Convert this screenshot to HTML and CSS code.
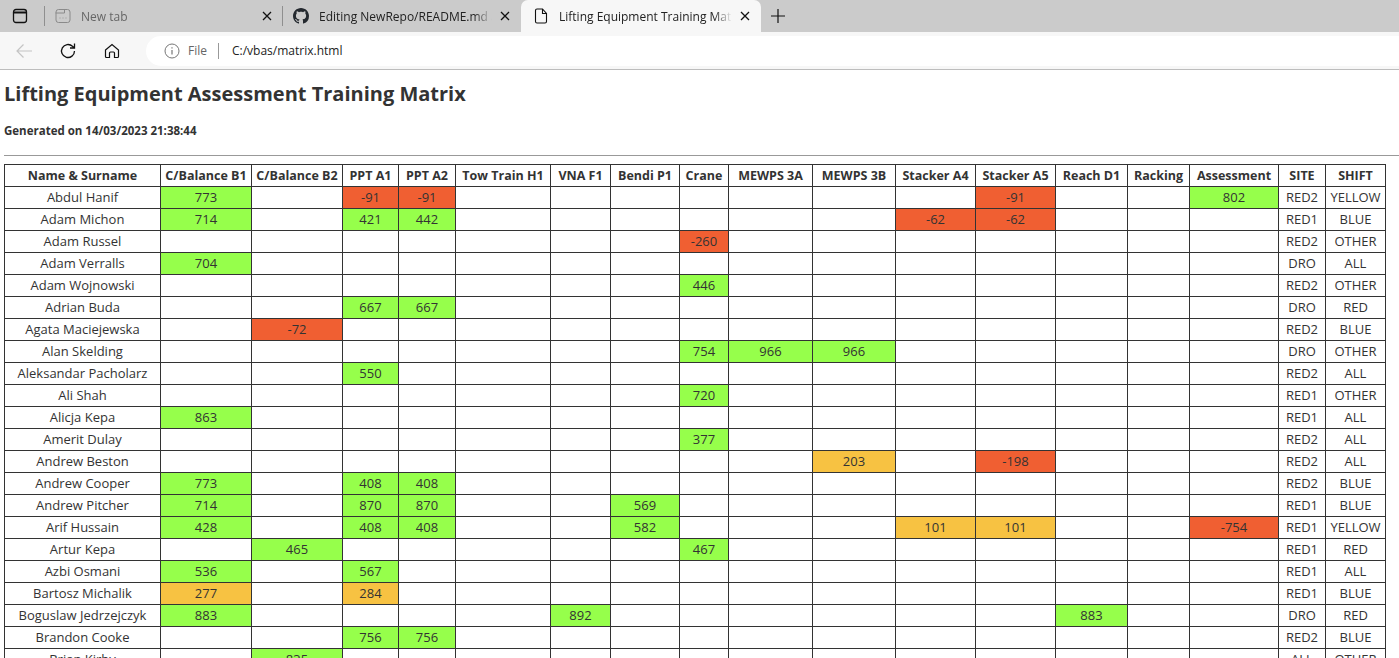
FILE: index.html
```html
<!DOCTYPE html>
<html lang="en">
<head>
    <meta charset="UTF-8">
    <title>Lifting Equipment Training Matrix</title>
    <link rel="stylesheet" href="styles.css">
</head>
<body>
    <div class="tabbar">
        <svg class="panelIcon" width="16" height="16" viewBox="0 0 16 16"><rect x="1.5" y="1.5" width="13" height="13" rx="2.5" fill="none" stroke="#111" stroke-width="1.3"/><path d="M2 3.5h12v2H2z" fill="#111"/></svg>
        <div class="tab">
            <svg class="favicon" width="16" height="16" viewBox="0 0 16 16"><rect x="1" y="1.5" width="14" height="13" rx="2.5" fill="none" stroke="#8a8a8a"/><path d="M1 5h8.5V1.5M5 10h.01M8 10h.01M11 10h.01" fill="none" stroke="#8a8a8a" stroke-linecap="round"/></svg>
            <span class="tabTitle muted">New tab</span>
            <svg class="close" width="10" height="10" viewBox="0 0 10 10"><path d="M1 1l8 8M9 1L1 9" stroke="#111" stroke-width="1.3"/></svg>
        </div>
        <div class="tab">
            <svg class="favicon" width="16" height="16" viewBox="0 0 16 16"><path fill="#24292f" d="M8 0C3.58 0 0 3.58 0 8c0 3.54 2.29 6.53 5.47 7.59.4.07.55-.17.55-.38 0-.19-.01-.82-.01-1.49-2.01.37-2.53-.49-2.69-.94-.09-.23-.48-.94-.82-1.13-.28-.15-.68-.52-.01-.53.63-.01 1.08.58 1.23.82.72 1.21 1.87.87 2.33.66.07-.52.28-.87.51-1.07-1.78-.2-3.64-.89-3.64-3.95 0-.87.31-1.59.82-2.15-.08-.2-.36-1.02.08-2.12 0 0 .67-.21 2.2.82.64-.18 1.32-.27 2-.27s1.36.09 2 .27c1.53-1.04 2.2-.82 2.2-.82.44 1.1.16 1.92.08 2.12.51.56.82 1.27.82 2.15 0 3.07-1.87 3.75-3.65 3.95.29.25.54.73.54 1.48 0 1.07-.01 1.93-.01 2.2 0 .21.15.46.55.38A8.01 8.01 0 0 0 16 8c0-4.42-3.58-8-8-8z"/></svg>
            <span class="tabTitle">Editing NewRepo/README.md at main</span>
            <svg class="close" width="10" height="10" viewBox="0 0 10 10"><path d="M1 1l8 8M9 1L1 9" stroke="#111" stroke-width="1.3"/></svg>
        </div>
        <div class="tab active">
            <svg class="favicon" width="16" height="16" viewBox="0 0 16 16"><path d="M2.5 2.5A1.5 1.5 0 0 1 4 1h5.5l4 4.5V13.500a1.500 1.500 0 0 1-1.500 1.500H4a1.500 1.500 0 0 1-1.500-1.500zM9.500 1v4.500h4" fill="none" stroke="#111" stroke-width="1.1"/></svg>
            <span class="tabTitle">Lifting Equipment Training Matrix</span>
            <svg class="close" width="10" height="10" viewBox="0 0 10 10"><path d="M1 1l8 8M9 1L1 9" stroke="#111" stroke-width="1.3"/></svg>
        </div>
        <svg class="plus" width="16" height="16" viewBox="0 0 16 16"><path d="M8 1v14M1 8h14" stroke="#111" stroke-width="1.2"/></svg>
    </div>

    <div class="toolbar">
        <svg class="navIcon" width="18" height="18" viewBox="0 0 18 18"><path d="M17 9H2M8.500 2.500L2 9l6.500 6.500" fill="none" stroke="#c4c4c4" stroke-width="1.2"/></svg>
        <svg class="navIcon" width="18" height="18" viewBox="0 0 18 18"><path d="M15.500 9a6.500 6.500 0 1 1-2-4.700L15.500 6M15.500 1.500V6H11" fill="none" stroke="#111" stroke-width="1.3"/></svg>
        <svg class="navIcon" width="18" height="18" viewBox="0 0 18 18"><path d="M2.500 8L9 2.500 15.500 8v6.500a1 1 0 0 1-1 1h-3V11a1 1 0 0 0-1-1h-3a1 1 0 0 0-1 1v4.500h-3a1 1 0 0 1-1-1z" fill="none" stroke="#111" stroke-width="1.2"/></svg>
        <div class="address">
            <svg width="16" height="16" viewBox="0 0 16 16"><circle cx="8" cy="8" r="7" fill="none" stroke="#777"/><path d="M8 7v4.500M8 4.300v1.200" stroke="#777" stroke-width="1.200"/></svg>
            <span class="scheme">File</span>
            <span class="addrSep"></span>
            <span class="url">C:/vbas/matrix.html</span>
        </div>
    </div>

    <main class="page">
        <h2>Lifting Equipment Assessment Training Matrix</h2>
        <h5>Generated on 14/03/2023 21:38:44</h5>
        <hr>
        <table>
            <colgroup>
                <col class="c156"><col class="c91"><col class="c91"><col class="c56"><col class="c57"><col class="c95"><col class="c60"><col class="c69"><col class="c49"><col class="c84"><col class="c83"><col class="c80"><col class="c80"><col class="c72"><col class="c62"><col class="c89"><col class="c47"><col class="c60">
            </colgroup>
            <tr><th>Name &amp; Surname</th><th>C/Balance B1</th><th>C/Balance B2</th><th>PPT A1</th><th>PPT A2</th><th>Tow Train H1</th><th>VNA F1</th><th>Bendi P1</th><th>Crane</th><th>MEWPS 3A</th><th>MEWPS 3B</th><th>Stacker A4</th><th>Stacker A5</th><th>Reach D1</th><th>Racking</th><th>Assessment</th><th>SITE</th><th>SHIFT</th></tr>
            <tr><td>Abdul Hanif</td><td class="ok">773</td><td></td><td class="bad">-91</td><td class="bad">-91</td><td></td><td></td><td></td><td></td><td></td><td></td><td></td><td class="bad">-91</td><td></td><td></td><td class="ok">802</td><td>RED2</td><td>YELLOW</td></tr>
            <tr><td>Adam Michon</td><td class="ok">714</td><td></td><td class="ok">421</td><td class="ok">442</td><td></td><td></td><td></td><td></td><td></td><td></td><td class="bad">-62</td><td class="bad">-62</td><td></td><td></td><td></td><td>RED1</td><td>BLUE</td></tr>
            <tr><td>Adam Russel</td><td></td><td></td><td></td><td></td><td></td><td></td><td></td><td class="bad">-260</td><td></td><td></td><td></td><td></td><td></td><td></td><td></td><td>RED2</td><td>OTHER</td></tr>
            <tr><td>Adam Verralls</td><td class="ok">704</td><td></td><td></td><td></td><td></td><td></td><td></td><td></td><td></td><td></td><td></td><td></td><td></td><td></td><td></td><td>DRO</td><td>ALL</td></tr>
            <tr><td>Adam Wojnowski</td><td></td><td></td><td></td><td></td><td></td><td></td><td></td><td class="ok">446</td><td></td><td></td><td></td><td></td><td></td><td></td><td></td><td>RED2</td><td>OTHER</td></tr>
            <tr><td>Adrian Buda</td><td></td><td></td><td class="ok">667</td><td class="ok">667</td><td></td><td></td><td></td><td></td><td></td><td></td><td></td><td></td><td></td><td></td><td></td><td>DRO</td><td>RED</td></tr>
            <tr><td>Agata Maciejewska</td><td></td><td class="bad">-72</td><td></td><td></td><td></td><td></td><td></td><td></td><td></td><td></td><td></td><td></td><td></td><td></td><td></td><td>RED2</td><td>BLUE</td></tr>
            <tr><td>Alan Skelding</td><td></td><td></td><td></td><td></td><td></td><td></td><td></td><td class="ok">754</td><td class="ok">966</td><td class="ok">966</td><td></td><td></td><td></td><td></td><td></td><td>DRO</td><td>OTHER</td></tr>
            <tr><td>Aleksandar Pacholarz</td><td></td><td></td><td class="ok">550</td><td></td><td></td><td></td><td></td><td></td><td></td><td></td><td></td><td></td><td></td><td></td><td></td><td>RED2</td><td>ALL</td></tr>
            <tr><td>Ali Shah</td><td></td><td></td><td></td><td></td><td></td><td></td><td></td><td class="ok">720</td><td></td><td></td><td></td><td></td><td></td><td></td><td></td><td>RED1</td><td>OTHER</td></tr>
            <tr><td>Alicja Kepa</td><td class="ok">863</td><td></td><td></td><td></td><td></td><td></td><td></td><td></td><td></td><td></td><td></td><td></td><td></td><td></td><td></td><td>RED1</td><td>ALL</td></tr>
            <tr><td>Amerit Dulay</td><td></td><td></td><td></td><td></td><td></td><td></td><td></td><td class="ok">377</td><td></td><td></td><td></td><td></td><td></td><td></td><td></td><td>RED2</td><td>ALL</td></tr>
            <tr><td>Andrew Beston</td><td></td><td></td><td></td><td></td><td></td><td></td><td></td><td></td><td></td><td class="warn">203</td><td></td><td class="bad">-198</td><td></td><td></td><td></td><td>RED2</td><td>ALL</td></tr>
            <tr><td>Andrew Cooper</td><td class="ok">773</td><td></td><td class="ok">408</td><td class="ok">408</td><td></td><td></td><td></td><td></td><td></td><td></td><td></td><td></td><td></td><td></td><td></td><td>RED2</td><td>BLUE</td></tr>
            <tr><td>Andrew Pitcher</td><td class="ok">714</td><td></td><td class="ok">870</td><td class="ok">870</td><td></td><td></td><td class="ok">569</td><td></td><td></td><td></td><td></td><td></td><td></td><td></td><td></td><td>RED1</td><td>BLUE</td></tr>
            <tr><td>Arif Hussain</td><td class="ok">428</td><td></td><td class="ok">408</td><td class="ok">408</td><td></td><td></td><td class="ok">582</td><td></td><td></td><td></td><td class="warn">101</td><td class="warn">101</td><td></td><td></td><td class="bad">-754</td><td>RED1</td><td>YELLOW</td></tr>
            <tr><td>Artur Kepa</td><td></td><td class="ok">465</td><td></td><td></td><td></td><td></td><td></td><td class="ok">467</td><td></td><td></td><td></td><td></td><td></td><td></td><td></td><td>RED1</td><td>RED</td></tr>
            <tr><td>Azbi Osmani</td><td class="ok">536</td><td></td><td class="ok">567</td><td></td><td></td><td></td><td></td><td></td><td></td><td></td><td></td><td></td><td></td><td></td><td></td><td>RED1</td><td>ALL</td></tr>
            <tr><td>Bartosz Michalik</td><td class="warn">277</td><td></td><td class="warn">284</td><td></td><td></td><td></td><td></td><td></td><td></td><td></td><td></td><td></td><td></td><td></td><td></td><td>RED1</td><td>BLUE</td></tr>
            <tr><td>Boguslaw Jedrzejczyk</td><td class="ok">883</td><td></td><td></td><td></td><td></td><td class="ok">892</td><td></td><td></td><td></td><td></td><td></td><td></td><td class="ok">883</td><td></td><td></td><td>DRO</td><td>RED</td></tr>
            <tr><td>Brandon Cooke</td><td></td><td></td><td class="ok">756</td><td class="ok">756</td><td></td><td></td><td></td><td></td><td></td><td></td><td></td><td></td><td></td><td></td><td></td><td>RED2</td><td>BLUE</td></tr>
            <tr><td>Brian Kirby</td><td></td><td class="ok">835</td><td></td><td></td><td></td><td></td><td></td><td></td><td></td><td></td><td></td><td></td><td></td><td></td><td></td><td>ALL</td><td>OTHER</td></tr>
        </table>
    </main>
</body>
</html>
```

FILE: styles.css
```css
html, body {
    margin: 0;
    height: 100%;
    overflow: hidden;
}
body {
    font-family: "Open Sans", "Noto Sans", sans-serif;
    color: #333;
    background-color: #fff;
}

/* browser chrome */
.tabbar {
    height: 32px;
    background-color: #cbcbcb;
    display: flex;
    align-items: center;
}
.panelIcon {
    margin: 0 16px 0 12px;
}
.tab {
    height: 20px;
    width: 238px;
    box-sizing: border-box;
    padding: 0 10px;
    border-left: 1px solid #8f8f8f;
    display: flex;
    align-items: center;
    font-size: 12px;
    color: #222;
}
.tab.active {
    width: 240px;
    height: 32px;
    margin-left: 1px;
    padding: 0 11px 0 12px;
    border-left: 0;
    border-radius: 7px 7px 0 0;
    background-color: #f7f7f7;
}
.tabTitle {
    flex: 1;
    margin: 0 8px 0 10px;
    white-space: nowrap;
    overflow: hidden;
    -webkit-mask-image: linear-gradient(to left, transparent, #000 18px);
    mask-image: linear-gradient(to left, transparent, #000 18px);
}
.muted {
    color: #666;
}
.plus {
    margin-left: 9px;
}
.toolbar {
    height: 38px;
    box-sizing: border-box;
    border-bottom: 1px solid #bdbdbd;
    background-color: #f7f7f7;
    display: flex;
    align-items: center;
    padding-left: 15px;
    gap: 26px;
}
.address {
    flex: 1;
    height: 30px;
    margin-left: -1px;
    background-color: #fff;
    border-radius: 15px 0 0 15px;
    display: flex;
    align-items: center;
    padding-left: 18px;
    font-size: 12px;
}
.scheme {
    margin-left: 8px;
    color: #666;
}
.addrSep {
    width: 1px;
    height: 16px;
    margin: 0 13px 0 11px;
    background-color: #999;
}
.url {
    color: #222;
}

/* report */
.page {
    padding: 0 0 0 4px;
}
h2 {
    margin: 0;
    padding-top: 9px;
    font-size: 20px;
    line-height: 30px;
    font-weight: 700;
}
h5 {
    margin: 14px 0 0;
    font-size: 11.500px;
    line-height: 16px;
    font-weight: 700;
}
hr {
    margin: 16px 0 8px;
    border: 0;
    border-top: 1px solid #999;
}
table {
    width: 1382px;
    table-layout: fixed;
    border-collapse: collapse;
    font-size: 13px;
}
th, td {
    height: 21px;
    padding: 0;
    border: 1px solid #333;
    text-align: center;
    white-space: nowrap;
    line-height: 21px;
}
th {
    font-size: 12.500px;
    font-weight: 700;
}
.ok {
    background-color: #96ff4b;
}
.warn {
    background-color: #f7c242;
}
.bad {
    background-color: #f05f32;
}
.c47 { width: 47px; }
.c49 { width: 49px; }
.c56 { width: 56px; }
.c57 { width: 57px; }
.c60 { width: 60px; }
.c62 { width: 62px; }
.c69 { width: 69px; }
.c72 { width: 72px; }
.c80 { width: 80px; }
.c83 { width: 83px; }
.c84 { width: 84px; }
.c89 { width: 89px; }
.c91 { width: 91px; }
.c95 { width: 95px; }
.c156 { width: 156px; }
```
